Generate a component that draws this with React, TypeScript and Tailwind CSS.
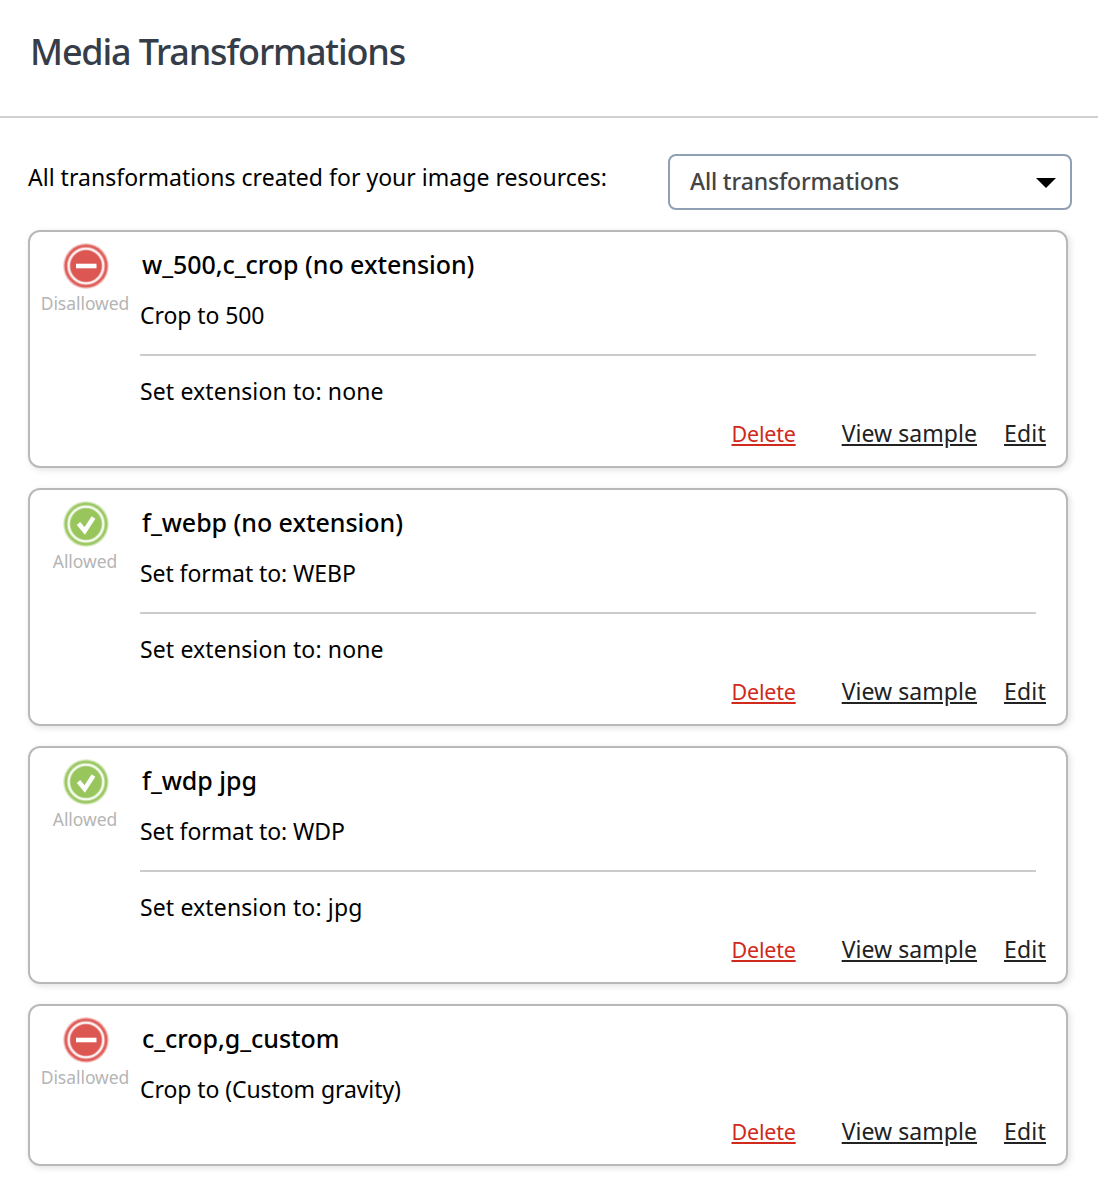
import { useState } from "react";

type Transformation = {
  name: string;
  allowed: boolean;
  description: string;
  extension?: string;
};

const transformations: Transformation[] = [
  { name: "w_500,c_crop (no extension)", allowed: false, description: "Crop to 500", extension: "none" },
  { name: "f_webp (no extension)", allowed: true, description: "Set format to: WEBP", extension: "none" },
  { name: "f_wdp jpg", allowed: true, description: "Set format to: WDP", extension: "jpg" },
  { name: "c_crop,g_custom", allowed: false, description: "Crop to (Custom gravity)" },
];

function StatusIcon({ allowed }: { allowed: boolean }) {
  const rim = allowed ? "#9cc963" : "#df5f5b";

  return (
    <svg viewBox="0 0 48 48" className="ml-0.5 h-12 w-12">
      {/* soft halo around the badge */}
      <circle cx="24" cy="24" r="23" fill={rim} fillOpacity="0.25" />
      <circle cx="24" cy="24" r="22.2" fill={rim} fillOpacity="0.4" />
      <circle cx="24" cy="24" r="21.3" fill={rim} />
      <circle cx="24" cy="24" r="17.3" fill={allowed ? "#98c65c" : "#dc5652"} stroke="#fff" strokeOpacity="0.35" strokeWidth="3.8" />
      <circle cx="24" cy="24" r="17.3" fill="none" stroke="#fff" strokeOpacity="0.85" strokeWidth="2" />
      {allowed ? (
        <path d="M16.5 23.5l6.2 7.5 8.8-13.5" fill="none" stroke="#fff" strokeWidth="4.4" />
      ) : (
        <path d="M14 24h20.5" stroke="#fff" strokeWidth="4.6" />
      )}
    </svg>
  );
}

function TransformationCard({ item }: { item: Transformation }) {
  return (
    <li className="flex flex-col rounded-xl border-2 border-[#b9b9b9] bg-white shadow-[2px_2px_6px_rgba(0,0,0,0.12)]">
      <div className="flex">
        <div className="flex w-[110px] shrink-0 flex-col items-center pt-2.5">
          <StatusIcon allowed={item.allowed} />
          <span className="mt-px text-[17.5px] leading-6 tracking-[-0.05px] text-[#b5b5b5]">
            {item.allowed ? "Allowed" : "Disallowed"}
          </span>
        </div>
        <div className="mr-[30px] flex-1">
          <h2 className="mt-4 ml-0.5 text-[25px] leading-8 font-medium tracking-[-0.04px]">{item.name}</h2>
          <p className="mt-[19px] text-[23px] leading-8 tracking-[-0.08px]">{item.description}</p>
          {item.extension && (
            <p className="mt-[23px] border-t-2 border-[#cbcbcb] pt-[19px] text-[23px] leading-8 tracking-[0.13px]">
              Set extension to: {item.extension}
            </p>
          )}
        </div>
      </div>
      <div className="mt-2.5 mr-5 mb-4 flex items-baseline justify-end leading-8 text-[#222]">
        <a href="#" className="mr-[46px] text-[21.5px] tracking-[-0.2px] text-[#cf2a1b] underline">Delete</a>
        <a href="#" className="mr-[27px] text-[23px] tracking-[0.05px] underline">View sample</a>
        <a href="#" className="text-[23px] tracking-[0.2px] underline">Edit</a>
      </div>
    </li>
  );
}

export default function App() {
  const [filter] = useState("All transformations");

  return (
    <main className="min-h-[1184px] w-[1098px] bg-white font-['Noto_Sans',sans-serif] whitespace-nowrap text-black">
      <header className="flex h-[118px] border-b-2 border-[#d0d0d0] pt-[26px] pl-[30px]">
        <h1 className="text-[36px] leading-[52px] font-medium tracking-[-1.17px] text-[#353d48]">Media Transformations</h1>
      </header>

      <div className="flex justify-between pt-9 pr-[26px] pl-7">
        <p className="mt-[7px] text-[23px] leading-8 tracking-[0.02px]">All transformations created for your image resources:</p>
        <button className="flex h-14 w-[404px] items-center justify-between rounded-lg border-2 border-[#8f9fb4] pr-3.5 pl-5 text-[#444]">
          <span className="mb-0.5 text-[23px] leading-8 font-medium tracking-[-0.15px]">{filter}</span>
          <svg viewBox="0 0 20 10" className="mt-0.5 h-2.5 w-5">
            <path d="M0 0h20L10 10z" fill="#000" />
          </svg>
        </button>
      </div>

      <ul className="mt-5 mr-[30px] ml-7 flex flex-col gap-5">
        {transformations.map((item) => (
          <TransformationCard key={item.name} item={item} />
        ))}
      </ul>
    </main>
  );
}
